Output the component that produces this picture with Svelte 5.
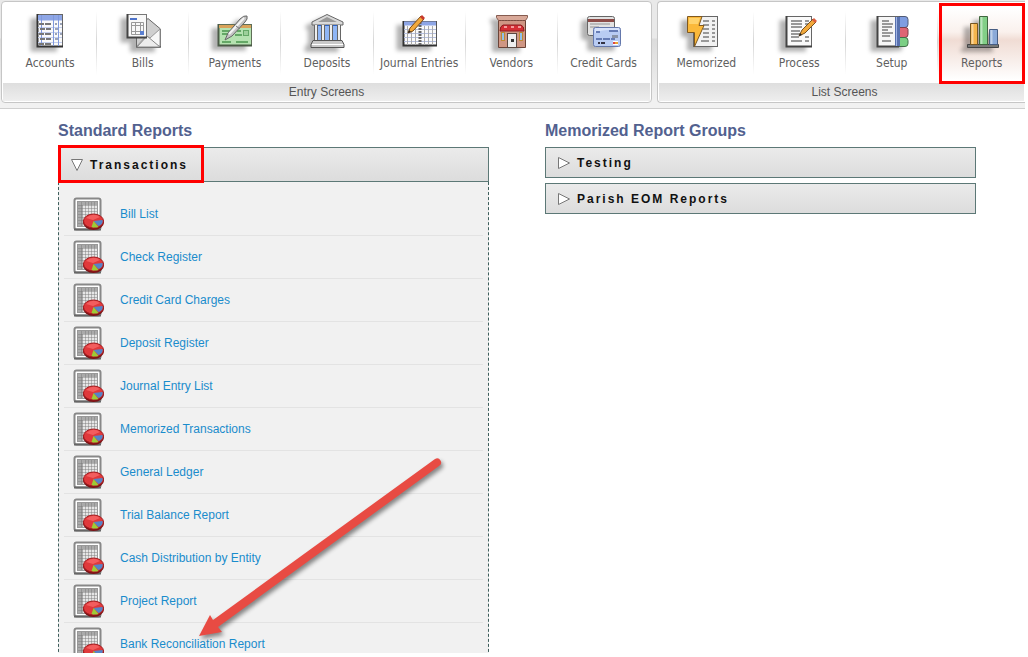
<script lang="ts">
	const entryScreens = [
		{id: 'accounts', label: 'Accounts'},
		{id: 'bills', label: 'Bills'},
		{id: 'payments', label: 'Payments'},
		{id: 'deposits', label: 'Deposits'},
		{id: 'journal', label: 'Journal Entries'},
		{id: 'vendors', label: 'Vendors'},
		{id: 'cards', label: 'Credit Cards'},
	];
	const listScreens = [
		{id: 'memorized', label: 'Memorized'},
		{id: 'process', label: 'Process'},
		{id: 'setup', label: 'Setup'},
		{id: 'reports', label: 'Reports'},
	];
	const groups = [
		{name: 'Entry Screens', kind: 'entry', items: entryScreens},
		{name: 'List Screens', kind: 'list', items: listScreens},
	];
	const reports = [
		'Bill List',
		'Check Register',
		'Credit Card Charges',
		'Deposit Register',
		'Journal Entry List',
		'Memorized Transactions',
		'General Ledger',
		'Trial Balance Report',
		'Cash Distribution by Entity',
		'Project Report',
		'Bank Reconciliation Report',
	];
	const memorized = ['Testing', 'Parish EOM Reports'];

	let active = $state('reports');
	let open = $state(true);
</script>

{#snippet icon(id: string)}
	<svg class="icon" viewBox="0 0 40 36" aria-hidden="true">
		{#if id === 'accounts'}
			<rect x="7.5" y="2.5" width="25" height="32" fill="#fafafa" stroke="#666" />
			<path d="M7.5 2v32.500H33" fill="none" stroke="#333" stroke-width="2" />
			<rect x="8" y="3" width="24" height="5" fill="#8ea6e6" />
			<path d="M8 8.5h24M8 15.5h24M8 20.5h24M8 25.5h24M8 30.5h24" stroke="#c5d0ee" />
			<path d="M11.5 3v31M23.5 3v31M28.5 3v31" stroke="#7f99dd" />
			<path d="M9 12h13M10 17h11M9 22h13M10 27h11M9 32h13" stroke="#777" stroke-width="2" stroke-dasharray="5 1 6 1" />
			<path d="M25 12h2M25 17h3M25 22h2M25 27h3M30 12h2M30 22h2" stroke="#9aa3b8" stroke-width="2" />
		{:else if id === 'bills'}
			<path d="M13.5 17L25 6.5 37.5 17v18.5h-24z" fill="#cfcfcf" stroke="#666" />
			<path d="M14 34l9-10 4 2 10-9v17z" fill="#f7f7f7" stroke="#999" />
			<path d="M14 35l10-11 13 11z" fill="#ececec" stroke="#888" />
			<rect x="4.5" y="2.5" width="19" height="23" fill="#f8f8f8" stroke="#777" />
			<path d="M4.5 2v23.500H24" fill="none" stroke="#444" stroke-width="2" />
			<path d="M7 7h7" stroke="#4d72c8" stroke-width="2" />
			<path d="M8.5 10.5h12v12h-12zM12.5 10v12M17.5 10v12M8 13.5h12M8 19.5h12" fill="none" stroke="#999" />
			<rect x="17" y="19" width="4" height="4" fill="#5a7fd0" />
		{:else if id === 'payments'}
			<rect x="3.5" y="12.5" width="33" height="21" fill="#b5e2b0" stroke="#5f6f57" />
			<path d="M3.5 12v21.500H37" fill="none" stroke="#4a5a46" stroke-width="2" />
			<rect x="4" y="13" width="32" height="3" fill="#d9a35a" />
			<path d="M7 19h8M7 22h6M22 19h4M20 23h7M7 30h9M21 30h12" stroke="#64a866" stroke-width="2" />
			<rect x="28.5" y="18.5" width="5" height="5" fill="#9dd09a" stroke="#64a866" />
			<path d="M10 28l3-7L25 7q4-4 7-3q1 3-2 6L17 24z" fill="#c4c4c4" stroke="#666" />
			<path d="M14 22L29 6" stroke="#f4f4f4" stroke-width="2" />
			<path d="M21 14l4 3" stroke="#777" />
		{:else if id === 'deposits'}
			<path d="M5 10L20 2.5 36 10v3H5z" fill="#d9d9d9" stroke="#666" />
			<path d="M11 10l9-5 10 5z" fill="#999" />
			<path d="M7 13h27v16H7z" fill="#2e63c4" />
			<path d="M12.500 14v14M20 14v14M28 14v14" stroke="#8fb6f6" stroke-width="4" />
			<path d="M9 13v16M16 13v16M24 13v16M32 13v16" stroke="#666" stroke-width="4" />
			<path d="M9 13v16M16 13v16M24 13v16M32 13v16" stroke="#eee" stroke-width="2" />
			<path d="M6 28.5h29l2 4v3H4v-3z" fill="#c9c9c9" stroke="#555" />
			<path d="M5 32.5h31" stroke="#fff" />
		{:else if id === 'journal'}
			<rect x="4.5" y="9.5" width="33" height="24" fill="#fafafa" stroke="#555" />
			<path d="M4.5 9v24.500H38" fill="none" stroke="#333" stroke-width="2" />
			<path d="M5 11.5h32" stroke="#8ea6e6" stroke-width="4" />
			<path d="M5 17.5h32M5 21.5h32M5 25.5h32M5 29.5h32" stroke="#b4bfdf" />
			<path d="M8.5 14v19M12.5 14v19M16.5 14v19M25.5 14v19M29.5 14v19M33.5 14v19" stroke="#aaa" />
			<path d="M21 10v24" stroke="#666" stroke-width="3" stroke-dasharray="2 1" />
			<path d="M9 21l2-5L22 4l3 3-11 12z" fill="#f2a93b" stroke="#7a4b17" />
			<path d="M21 5l2-2 3 3-2 2z" fill="#c8382c" />
			<path d="M9 21l1-3 2 2z" fill="#222" />
		{:else if id === 'vendors'}
			<path d="M7.5 6h27v29.5h-27z" fill="#cf9684" stroke="#6c4438" />
			<path d="M5.5 3.5h31v2l-2 3h-27l-2-3z" fill="#d8a898" stroke="#855b4f" />
			<path d="M8 8.5h26" stroke="#7b4c40" stroke-dasharray="2 1" />
			<path d="M12 13h18q3 1 3 6H9q0-5 3-6z" fill="#d52f35" stroke="#8e1d20" />
			<path d="M13 15h3M20 15h3M27 15h3" stroke="#f59a9a" stroke-width="2" />
			<rect x="16.5" y="21.5" width="9" height="14" fill="#eee" stroke="#5b4841" />
			<rect x="10.5" y="20.5" width="3" height="8" fill="#8fc1ec" stroke="#bd8b33" />
			<rect x="28.5" y="20.5" width="3" height="8" fill="#8fc1ec" stroke="#bd8b33" />
			<rect x="20" y="27" width="3" height="3" fill="#333" />
		{:else if id === 'cards'}
			<rect x="4.5" y="4.5" width="27" height="19" rx="2" fill="#e2e2e2" stroke="#666" />
			<path d="M5 8.5h26" stroke="#8d4c48" stroke-width="3" />
			<path d="M7 12h20M7 15h9" stroke="#bbb" stroke-width="2" />
			<rect x="10.5" y="15.5" width="27" height="19" rx="2" fill="#b9ccf3" stroke="#6478ac" />
			<path d="M12 21q10-5 24-2v-3H12z" fill="#d8e3fb" />
			<path d="M13 20h4M26 19h9M13 27h6M20 27h7M28 27h4" stroke="#667cb5" stroke-width="2" />
			<path d="M15 31h2M18 31h4" stroke="#334" stroke-width="2" />
			<rect x="29" y="23" width="6" height="3" fill="#8a94a8" />
			<rect x="30" y="29" width="5" height="4" fill="#fff" />
			<path d="M30 31h2" stroke="#d44" stroke-width="2" />
			<path d="M32 31h3" stroke="#e9a233" stroke-width="2" />
		{:else if id === 'memorized'}
			<rect x="7.5" y="4.5" width="24" height="30" fill="#f2f2f2" stroke="#666" />
			<path d="M17 9h6M17 13h6M17 17h6M17 21h6M17 25h6M15 29h8M26 9h3M26 13h3M26 17h3M26 21h3M26 25h3M26 29h3" stroke="#999" stroke-width="2" />
			<path d="M1.5 4.5H16l-3 9h5L8.5 34.5V20.5h-7z" fill="#fbb93a" stroke="#80591f" />
			<path d="M3 6h11l-2 6H3z" fill="#ffd36d" />
		{:else if id === 'process'}
			<rect x="7.5" y="4.5" width="25" height="30" fill="#fafafa" stroke="#666" />
			<path d="M7.5 4v30.500H33" fill="none" stroke="#444" stroke-width="2" />
			<path d="M12 9h11M12 12h11M12 15h11M12 19h9M12 22h11M12 25h8M12 29h11M26 9h4M26 12h3M26 25h4M26 29h4" stroke="#999" stroke-width="2" />
			<path d="M20 24l3-6L34 7l3 3-11 11z" fill="#f2a93b" stroke="#76501f" />
			<path d="M33 8l2-2 3 3-2 2z" fill="#db5b3c" />
			<path d="M20 24l1-3 2 2z" fill="#222" />
		{:else if id === 'setup'}
			<path d="M25 4.5h8q3 0 3 3v5q0 3-3 3h-8z" fill="#7f9de0" stroke="#505a75" />
			<path d="M25 15.5h8q3 0 3 2v5q0 3-3 3h-8z" fill="#df6674" stroke="#7a3f49" />
			<path d="M25 25.5h8q3 0 3 3v3q0 3-3 3h-8z" fill="#7bcf84" stroke="#426f48" />
			<rect x="5.5" y="4.5" width="21" height="30" fill="#f6f6f6" stroke="#666" />
			<path d="M5.5 4v30.500H27" fill="none" stroke="#444" stroke-width="2" />
			<path d="M10 9h7M10 12h11M10 15h10M10 18h6M10 21h11M10 24h8M10 29h9" stroke="#999" stroke-width="2" />
			<path d="M23 5h5v29h-5z" fill="#5871ae" />
			<path d="M24.5 5v29" stroke="#a3b6e5" />
		{:else}
			<path d="M5.5 32.5h31v3h-31z" fill="#777" stroke="#444" />
			<path d="M8.5 11.5h7v21h-7z" fill="#f5b54d" stroke="#765723" />
			<path d="M17.5 4.5h8v28h-8z" fill="#82cf87" stroke="#40663f" />
			<path d="M27.5 17.5h8v15h-8z" fill="#8ba9d8" stroke="#465c82" />
			<path d="M10.5 12v20M19.5 5v27M29.5 18v14" stroke="#fff" stroke-opacity=".45" stroke-width="2" />
		{/if}
	</svg>
{/snippet}

<div class="page">
	<nav class="ribbon">
		{#each groups as group}
			<section class="group {group.kind}">
				<div class="tools">
					{#each group.items as item}
						<button class="tool" class:active={active === item.id} onclick={() => (active = item.id)}>
							{@render icon(item.id)}
							<span>{item.label}</span>
						</button>
					{/each}
				</div>
				<div class="group-name">{group.name}</div>
			</section>
		{/each}
	</nav>

	<main>
		<section class="column">
			<h2>Standard Reports</h2>
			<button class="bar big" aria-expanded={open} onclick={() => (open = !open)}>
				<svg class="toggle" viewBox="0 0 14 14" aria-hidden="true">
					<path d="M1.5 1.5h11L7 12.5z" fill="#fff" stroke="#777" />
				</svg>
				Transactions
				<span class="marker"></span>
			</button>
			{#if open}
				<ul class="reports">
					{#each reports as report}
						<li>
							<svg class="report-icon" viewBox="0 0 32 34" aria-hidden="true">
								<rect x="1.5" y="1.5" width="26" height="31" rx="2" fill="#fff" stroke="#888" stroke-width="2" />
								<path d="M1 32.5h27" stroke="#666" stroke-width="2" />
								<rect x="5" y="5" width="19" height="24" fill="#e6e6e6" />
								<path d="M5 5h19v3H5zM5 8h5v21H5z" fill="#aaa" />
								<path d="M5 8.5h19M5 11.5h19M5 14.5h19M5 17.5h19M5 20.5h19M5 23.5h19M5 26.5h19M8.5 5v24M12.5 5v24M15.5 5v24M18.5 5v24M21.5 5v24" stroke="#777" stroke-opacity=".45" />
								<rect x="4.5" y="4.5" width="20" height="25" fill="none" stroke="#999" />
								<ellipse cx="20.5" cy="25.5" rx="10.5" ry="7.5" fill="#7d1215" />
								<ellipse cx="20.5" cy="24" rx="10" ry="7" fill="#e0393b" stroke="#a41d20" />
								<path d="M13 21q7-6 14-1l-7 3z" fill="#f77" fill-opacity=".6" />
								<path d="M20.5 24l9-1q1 4-4 6z" fill="#5584c8" />
								<path d="M20.5 24l5 6q-4 1-7 0z" fill="#9ccc36" />
							</svg>
							<a href="#report">{report}</a>
						</li>
					{/each}
				</ul>
			{/if}
		</section>

		<section class="column">
			<h2>Memorized Report Groups</h2>
			{#each memorized as name}
				<button class="bar">
					<svg class="toggle" viewBox="0 0 14 14" aria-hidden="true">
						<path d="M1.5 1.5v11L12.5 7z" fill="#fff" stroke="#777" />
					</svg>
					{name}
				</button>
			{/each}
		</section>
	</main>

	<svg class="arrow" viewBox="0 0 260 190" aria-hidden="true">
		<path d="M245 9a4 4 0 0 1 4 7L28 177l4 5-23 4 11-21 3 5z" fill="#e84b43" />
	</svg>
</div>

<style>
	:global(body) {
		margin: 0;
		background: #fff;
	}
	.page {
		position: relative;
		box-sizing: border-box;
		height: 100vh;
		overflow: hidden;
		display: flex;
		flex-direction: column;
		border-bottom: 4px solid #fff;
		background: #fff;
		font-family: 'Liberation Sans', Arial, sans-serif;
		font-size: 12px;
	}
	button {
		border: 0;
		margin: 0;
		padding: 0;
		font: inherit;
		cursor: pointer;
	}

	.ribbon {
		display: flex;
		flex: none;
		gap: 5px;
		margin-right: 3px;
		padding: 1px 0 5px 1px;
		background: linear-gradient(#e9e9e9 38px, #dcdcdc 39px, #f1f1f1 100px);
		border-bottom: 1px solid #cfcfcf;
	}
	.group {
		box-sizing: border-box;
		min-width: 0;
		border: 1px solid #c6c6c6;
		border-radius: 4px;
		background: #fff;
	}
	.entry {
		flex: 651 1 0;
	}
	.list {
		flex: 368 1 0;
		border-right: 0;
		border-radius: 4px 0 0 4px;
	}
	.tools {
		display: grid;
		grid-template-columns: repeat(7, 1fr);
		height: 81px;
		padding: 0 2px;
	}
	.list .tools {
		grid-template-columns: 93fr 93fr 93fr 88fr;
		padding-right: 0;
	}
	.tool {
		position: relative;
		display: flex;
		flex-direction: column;
		align-items: center;
		gap: 7px;
		padding-top: 10px;
		background: none;
		color: #606060;
		font-family: 'DejaVu Sans Condensed', 'DejaVu Sans', Tahoma, sans-serif;
		line-height: 16px;
		white-space: nowrap;
	}
	.tool + .tool {
		border-left: 1px solid;
		border-image: linear-gradient(#fff 10px, #d5d5d5 40px, #fff 72px) 1;
	}
	.tool.active {
		background: linear-gradient(#fff 6px, #faf1ed 30px, #f0dcd4 38px, #fff 78px);
	}
	/* marks the selected screen */
	.tool.active::after {
		content: '';
		position: absolute;
		inset: 1px 0 -1px 1px;
		border: 3px solid #f00;
	}
	.icon {
		width: 40px;
		height: 36px;
		overflow: visible;
		filter: drop-shadow(-6px 4px 2px rgba(0, 0, 0, 0.3));
	}
	.group-name {
		margin: 0 1px 1px;
		background: linear-gradient(#dedede, #eee);
		color: #555;
		line-height: 18px;
		text-align: center;
	}
	.list .group-name {
		padding-left: 6px;
	}

	main {
		display: grid;
		grid-template-columns: 1fr 1fr;
		flex: 1;
		gap: 56px;
		min-height: 0;
		padding: 12px 52px 0 58px;
	}
	h2 {
		margin: 0 0 6px;
		color: #52618f;
		font-size: 16px;
		line-height: 20px;
	}
	.bar {
		position: relative;
		box-sizing: border-box;
		display: flex;
		align-items: center;
		gap: 6px;
		width: 100%;
		height: 31px;
		margin-bottom: 5px;
		padding-left: 11px;
		border: 1px solid #5c7876;
		background: linear-gradient(#ebebeb, #dcdcdc);
		color: #111;
		font-weight: bold;
		letter-spacing: 2px;
	}
	.big {
		height: 35px;
		margin: 0;
	}
	.toggle {
		width: 14px;
		height: 14px;
	}
	.marker {
		position: absolute;
		top: -3px;
		left: -1px;
		box-sizing: border-box;
		width: 146px;
		height: 38px;
		border: 3px solid #f00;
	}
	.reports {
		margin: 0;
		padding: 11px 5px 0;
		border: 1px dashed #3f5f5d;
		border-top: 0;
		background: #f1f1f1;
		list-style: none;
	}
	li {
		box-sizing: border-box;
		display: flex;
		align-items: center;
		gap: 15px;
		height: 43px;
		padding-left: 9px;
		border-bottom: 1px solid #e3e3e3;
	}
	.report-icon {
		width: 32px;
		height: 34px;
	}
	a {
		color: #1a8ccc;
		text-decoration: none;
	}
	.arrow {
		position: absolute;
		top: 450px;
		left: 190px;
		width: 260px;
		height: 190px;
		filter: drop-shadow(2px 3px 2px rgba(0, 0, 0, 0.45));
		pointer-events: none;
	}
</style>
